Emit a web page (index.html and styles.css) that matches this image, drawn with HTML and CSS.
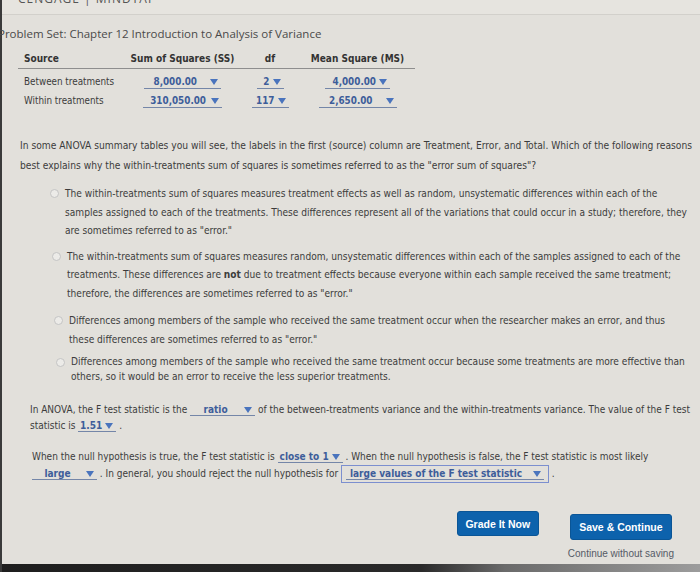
FILE: index.html
```html
<!DOCTYPE html>
<html>
<head>
<meta charset="utf-8">
<link rel="stylesheet" href="styles.css">
</head>
<body>
<div class="screen">
  <div class="topbar">
    <span class="logo"><svg width="10" height="10" viewBox="0 0 10 10"><rect x="1" y="0" width="3" height="3" fill="#2f6db5"/><rect x="5" y="0" width="3" height="3" fill="#6a9fd8"/></svg></span>
    <span class="brand">CENGAGE | MINDTAP</span>
  </div>
  <div class="content">
    <h1 class="title">Problem Set: Chapter 12 Introduction to Analysis of Variance</h1>

    <div class="anova">
      <div class="cell hd src">Source</div>
      <div class="cell hd">Sum of Squares (SS)</div>
      <div class="cell hd">df</div>
      <div class="cell hd">Mean Square (MS)</div>
      <div class="rule"></div>

      <div class="cell src">Between treatments</div>
      <div class="cell"><span class="dd w77">8,000.00<i class="arr"></i></span></div>
      <div class="cell"><span class="dd w27">2<i class="arr"></i></span></div>
      <div class="cell"><span class="dd w65">4,000.00<i class="arr"></i></span></div>

      <div class="cell src">Within treatments</div>
      <div class="cell"><span class="dd w79">310,050.00<i class="arr"></i></span></div>
      <div class="cell"><span class="dd w37">117<i class="arr"></i></span></div>
      <div class="cell"><span class="dd w78">2,650.00<i class="arr"></i></span></div>
    </div>

    <p class="question">In some ANOVA summary tables you will see, the labels in the first (source) column are Treatment, Error, and Total. Which of the following reasons best explains why the within-treatments sum of squares is sometimes referred to as the "error sum of squares"?</p>

    <ul class="options">
      <li class="opt"><span class="radio"></span><span class="otext">The within-treatments sum of squares measures treatment effects as well as random, unsystematic differences within each of the samples assigned to each of the treatments. These differences represent all of the variations that could occur in a study; therefore, they are sometimes referred to as "error."</span></li>
      <li class="opt o2"><span class="radio"></span><span class="otext">The within-treatments sum of squares measures random, unsystematic differences within each of the samples assigned to each of the treatments. These differences are <b>not</b> due to treatment effects because everyone within each sample received the same treatment; therefore, the differences are sometimes referred to as "error."</span></li>
      <li class="opt o3"><span class="radio"></span><span class="otext">Differences among members of the sample who received the same treatment occur when the researcher makes an error, and thus these differences are sometimes referred to as "error."</span></li>
      <li class="opt o4"><span class="radio"></span><span class="otext">Differences among members of the sample who received the same treatment occur because some treatments are more effective than others, so it would be an error to receive the less superior treatments.</span></li>
    </ul>

    <p class="fill f1">In ANOVA, the F test statistic is the <span class="dd w65 c">ratio<i class="arr"></i></span> of the between-treatments variance and the within-treatments variance. The value of the F test statistic is <span class="dd w38">1.51<i class="arr"></i></span> .</p>

    <p class="fill f2">When the null hypothesis is true, the F test statistic is <span class="dd w65">close to 1<i class="arr"></i></span> . When the null hypothesis is false, the F test statistic is most likely <span class="dd w65 c">large<i class="arr"></i></span> . In general, you should reject the null hypothesis for <span class="focus"><span class="dd w200">large values of the F test statistic<i class="arr"></i></span></span> .</p>

    <div class="actions">
      <button class="btn grade">Grade It Now</button>
      <div class="savecol">
        <button class="btn save">Save &amp; Continue</button>
        <span class="nosave">Continue without saving</span>
      </div>
    </div>
  </div>
  <div class="bezel"></div>
</div>
</body>
</html>
```
FILE: styles.css
```css
html, body {
  margin: 0;
  padding: 0;
}
body {
  width: 700px;
  height: 572px;
  overflow: hidden;
  background: #e2e0db;
  font-family: "DejaVu Sans Condensed", "DejaVu Sans", sans-serif;
  font-stretch: condensed;
  color: #3c3c3c;
}
.screen {
  height: 572px;
  display: flex;
  flex-direction: column;
  border-left: 2px solid #3a3a3a;
  box-sizing: border-box;
}
.topbar {
  height: 14px;
  background: #e6e4df;
  border-bottom: 1px solid #d2d0cb;
  overflow: hidden;
  display: flex;
  align-items: flex-end;
  gap: 4px;
  padding-left: 2px;
}
.logo {
  display: block;
  height: 4px;
  overflow: hidden;
  margin-bottom: 8px;
}
.logo svg { display: block; margin-top: -6px; }
.brand {
  font-family: "Open Sans", sans-serif;
  font-stretch: normal;
  font-size: 12px;
  line-height: 13px;
  color: #555;
  letter-spacing: 1px;
  margin-bottom: 9px;
}
.content {
  flex: 1;
  padding: 0 8px 0 0;
}
.title {
  font-family: "Open Sans", sans-serif;
  font-stretch: normal;
  font-weight: 400;
  font-size: 11.5px;
  color: #4a4a4a;
  margin: 11px 0 0 -4px;
  line-height: 16px;
}
.anova {
  display: grid;
  grid-template-columns: 107px 115px 60px 115px;
  margin: 9px 0 0 16px;
  font-size: 9.8px;
}
.cell {
  text-align: center;
  height: 19px;
  line-height: 19px;
}
.cell.src {
  text-align: left;
  padding-left: 6px;
}
.cell.hd {
  font-weight: bold;
  color: #333;
  height: 17px;
  line-height: 16px;
  font-size: 10px;
}
.rule {
  grid-column: 1 / -1;
  height: 0;
  border-top: 1px solid #8e8e8e;
  margin-bottom: 3px;
}
.dd {
  display: inline-block;
  border-bottom: 1px solid #7486a8;
  color: #3d5d9a;
  font-weight: bold;
  line-height: 13px;
  text-align: right;
  padding-right: 14px;
  position: relative;
  box-sizing: border-box;
  white-space: nowrap;
}
.dd.c { text-align: center; padding-left: 0; }
.arr {
  position: absolute;
  right: 3px;
  top: 4px;
  width: 0;
  height: 0;
  border-left: 4px solid transparent;
  border-right: 4px solid transparent;
  border-top: 6px solid #4a74bd;
}
.w27 { width: 27px; }
.w37 { width: 37px; }
.w38 { width: 38px; }
.w65 { width: 65px; }
.w77 { width: 77px; padding-right: 24px; }
.w78 { width: 78px; padding-right: 24px; }
.w79 { width: 79px; padding-right: 16px; }
.w200 { width: 198px; text-align: left; padding-left: 4px; }
.question {
  font-size: 10.2px;
  line-height: 20px;
  margin: 26px 0 0 18px;
}
.options {
  list-style: none;
  padding: 0;
  margin: 9px 0 0 48px;
  font-size: 10.1px;
  line-height: 18.5px;
}
.opt {
  display: flex;
  gap: 6px;
  margin-bottom: 7px;
}
.opt.o2 { margin-left: 2px; margin-bottom: 9px; }
.opt.o3 { margin-left: 4px; margin-bottom: 5px; }
.opt.o4 { margin-left: 6px; line-height: 15px; }
.radio {
  flex: none;
  width: 7px;
  height: 7px;
  border: 1px solid #c4c4c4;
  border-radius: 50%;
  background: #ecebe8;
  margin-top: 4px;
}
.otext { flex: 1; }
.fill {
  font-size: 10px;
  line-height: 16px;
  margin: 0 0 0 28px;
}
.f1 { margin-top: 18px; }
.f2 { margin-top: 15px; margin-left: 30px; }
.fill .dd { line-height: 11px; }
.fill .arr { top: 3px; }
.focus {
  display: inline-block;
  border: 1px solid #7c8fcf;
  padding: 1px 4px 2px 4px;
  line-height: 13px;
}
.actions {
  display: flex;
  justify-content: flex-end;
  gap: 29px;
  margin: 28px 18px 0 0;
}
.btn {
  font-family: "Liberation Sans Narrow", "Liberation Sans", sans-serif;
  font-stretch: normal;
  font-weight: bold;
  font-size: 10.5px;
  color: #fff;
  background: #0d62ac;
  border: 1px solid #0a5596;
  border-radius: 3px;
  cursor: pointer;
}
.grade {
  width: 82px;
  height: 25px;
}
.savecol {
  display: flex;
  flex-direction: column;
  align-items: center;
  margin-top: 3px;
}
.save {
  width: 102px;
  height: 26px;
}
.nosave {
  font-family: "Liberation Sans Narrow", "Liberation Sans", sans-serif;
  font-stretch: normal;
  font-size: 10px;
  color: #555a66;
  margin-top: 8px;
}
.bezel {
  height: 8px;
  background: linear-gradient(to right, #1e1e1e 0%, #2a2a2a 60%, #6a6a6a 72%, #9c9c9c 100%);
}
```
